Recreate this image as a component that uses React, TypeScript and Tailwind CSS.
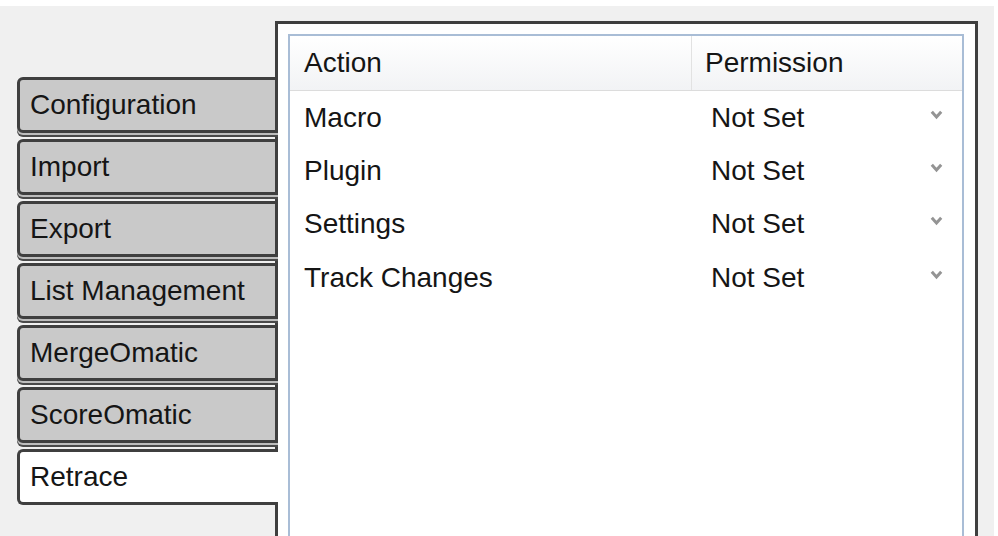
const tabs = ["Configuration", "Import", "Export", "List Management", "MergeOmatic", "ScoreOmatic", "Retrace"];
const selectedTab = "Retrace";

const permissions = [
	{ action: "Macro", value: "Not Set" },
	{ action: "Plugin", value: "Not Set" },
	{ action: "Settings", value: "Not Set" },
	{ action: "Track Changes", value: "Not Set" },
];

export default function App() {
	return (
		<div
			className="w-[998px] h-[536px] bg-white overflow-hidden text-[28px] text-[#151515]"
			style={{ fontFamily: '"Liberation Sans", Arial, sans-serif' }}
		>
			<div className="mt-[6px] w-[994px] h-[530px] bg-[#f0f0f0] overflow-hidden flex items-start">
				{/* side tabs */}
				<div className="relative z-10 ml-[17px] mt-[71px] -mr-[3px] w-[261px] flex flex-col gap-[6px]">
					{tabs.map((tab) => (
						<SideTab key={tab} label={tab} selected={tab === selectedTab} />
					))}
				</div>

				{/* panel */}
				<div className="mt-[15px] w-[703px] h-[600px] bg-white border-[3px] border-[#3f3f3f] pt-[10px] pl-[10px] pr-[11px]">
					<div className="h-full border-2 border-[#a9bdd6] bg-white">
						<div className="flex h-[55px] bg-gradient-to-b from-white to-[#f2f3f5] border-b border-[#dcdcdc]">
							<div className="w-[402px] pl-[14px] flex items-center border-r border-[#e2e2e2]">Action</div>
							<div className="flex-1 pl-[13px] flex items-center">Permission</div>
						</div>
						{permissions.map((row, i) => (
							<div key={row.action} className={`flex items-center ${i === 3 ? "h-[56px]" : "h-[53px]"}`}>
								<div className="w-[402px] pl-[14px]">{row.action}</div>
								<div className="flex-1 pl-[19px] pr-[19px] flex items-center justify-between">
									<span>{row.value}</span>
									<svg width="13" height="10" viewBox="0 0 13 10" className="mt-[-6px]">
										<path d="M1.8 1.8 L6.5 7 L11.2 1.8" fill="none" stroke="#949494" strokeWidth="3" />
									</svg>
								</div>
							</div>
						))}
					</div>
				</div>
			</div>
		</div>
	);
}

function SideTab({ label, selected }: { label: string; selected: boolean }) {
	if (selected) {
		return (
			<div className="h-[56px] bg-white border-[3px] border-r-0 border-[#3f3f3f] rounded-l-[6px] pl-[10px] pr-[3px] flex items-center">
				{label}
			</div>
		);
	}
	return (
		<div className="h-[56px] bg-[#c9c9c9] border-[3px] border-[#3f3f3f] rounded-l-[6px] pl-[10px] flex items-center shadow-[0_2px_0_0_#bdbdbd,0_4px_0_0_#4a4a4a]">
			{label}
		</div>
	);
}
